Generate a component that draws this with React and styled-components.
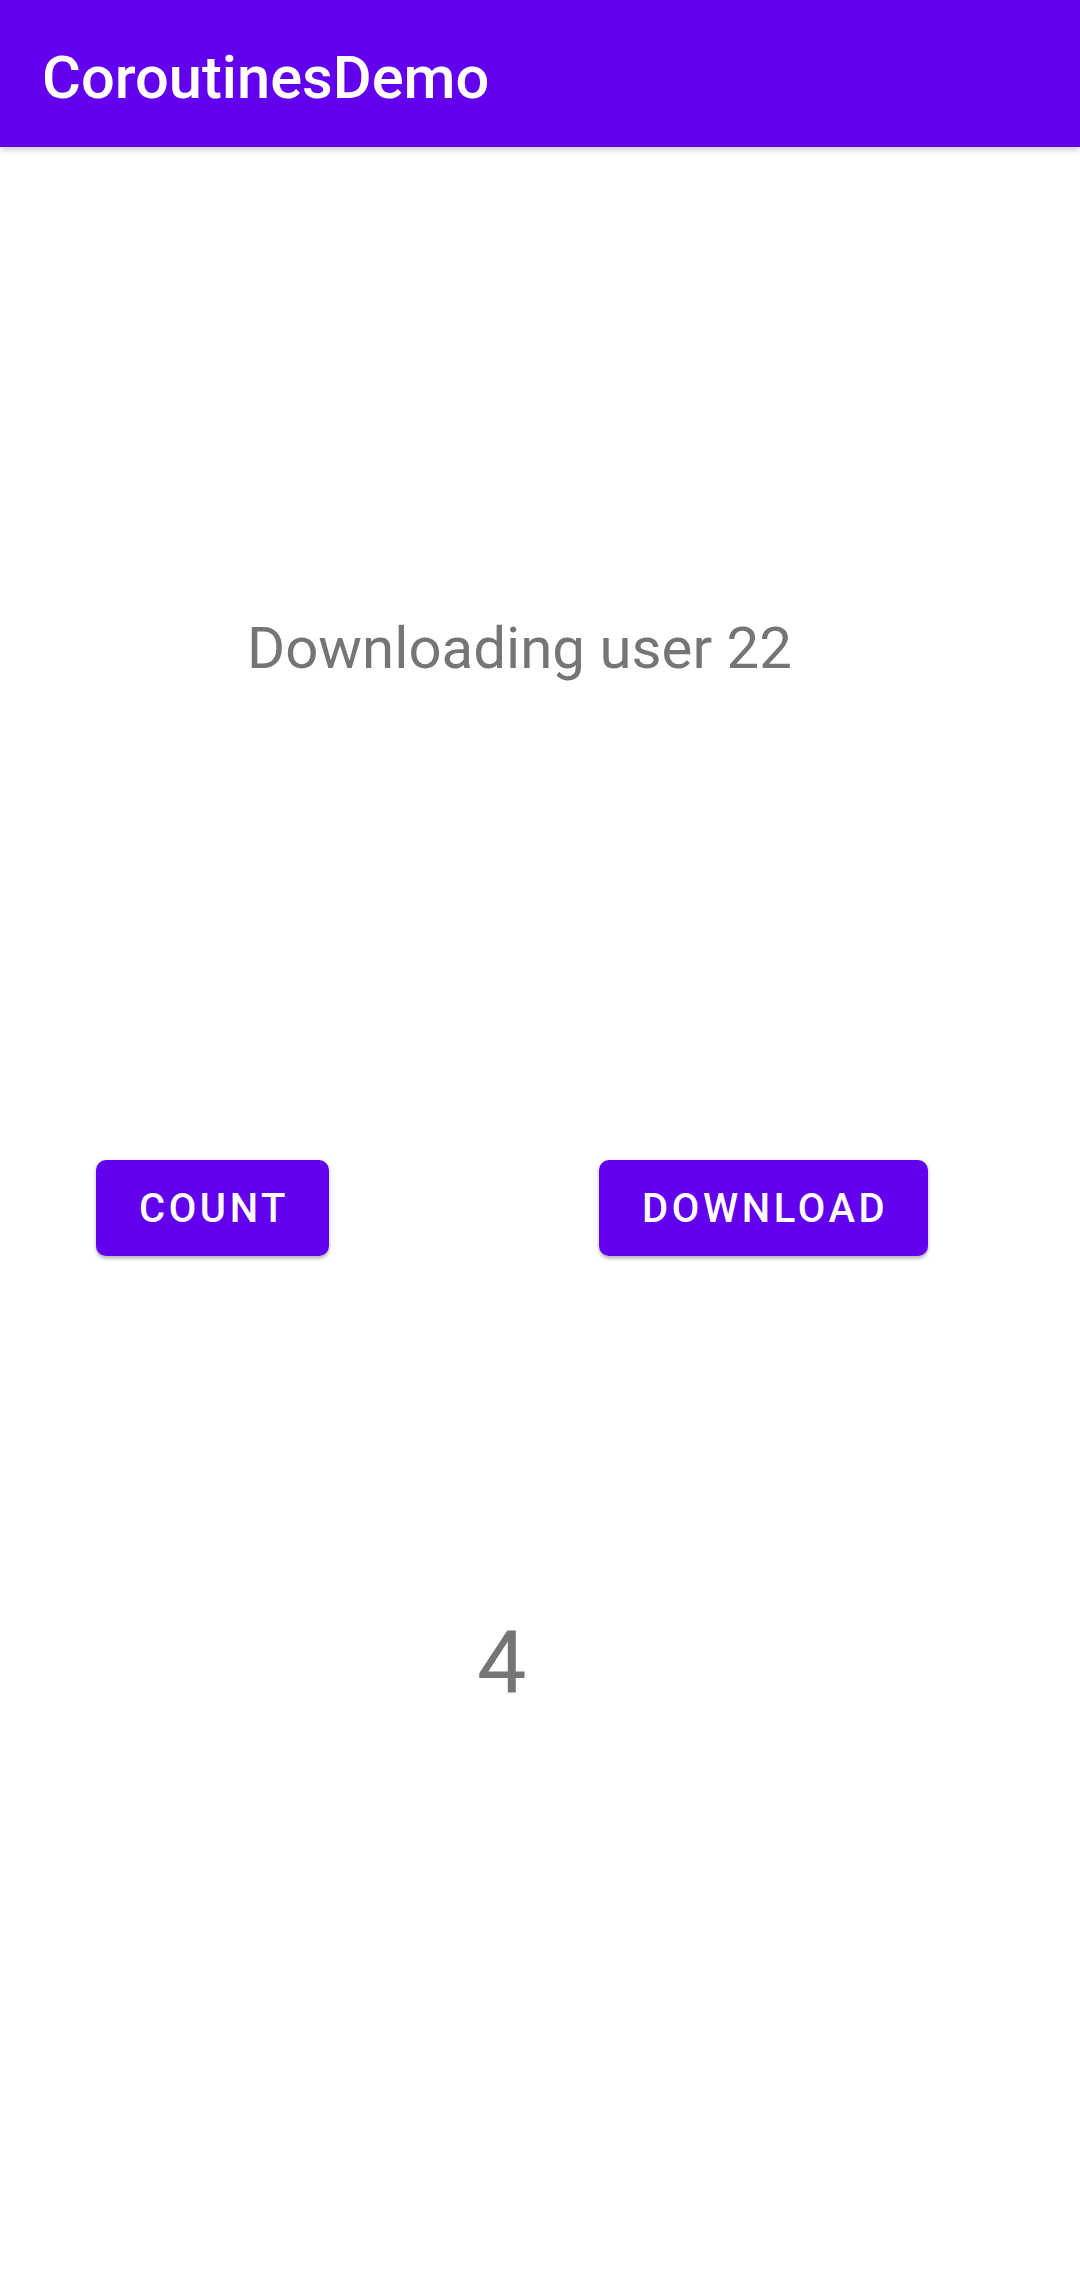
import React from "react";
import styled, { createGlobalStyle } from "styled-components";

const Global = createGlobalStyle`
  html, body { margin: 0; padding: 0; background: #ffffff; }
  body { font-family: Roboto, "Noto Sans", sans-serif; }
`;

const Screen = styled.div`
  width: 1080px;
  min-height: 2273px;
  background: #ffffff;
  display: flex;
  flex-direction: column;
`;

const Toolbar = styled.header`
  height: 147px;
  box-sizing: border-box;
  padding: 8px 0 0 42px;
  background: #6200ee;
  display: flex;
  align-items: center;
  box-shadow: 0 3px 6px rgba(0, 0, 0, 0.18);
  position: relative;
  z-index: 1;
`;

const Title = styled.h1`
  margin: 0;
  font-family: Roboto, sans-serif;
  font-weight: 500;
  font-size: 59.6px;
  line-height: normal;
  color: #ffffff;
`;

const Content = styled.main`
  display: flex;
  flex-direction: column;
`;

const Label = styled.div`
  margin-top: ${(p) => p.$top}px;
  padding-left: ${(p) => p.$left}px;
  font-family: Roboto, sans-serif;
  font-weight: 400;
  font-size: ${(p) => p.$size}px;
  line-height: normal;
  color: #757575;
`;

const ButtonRow = styled.div`
  margin-top: 478px;
  padding-left: 96px;
  display: flex;
  gap: 270px;
`;

const Button = styled.button`
  height: 96px;
  padding: 0 40px 0 43px;
  border: none;
  border-radius: 10px;
  background: #6200ee;
  color: #ffffff;
  font-family: Roboto, sans-serif;
  font-weight: 500;
  font-size: 40px;
  letter-spacing: 3.6px;
  text-transform: uppercase;
  display: flex;
  align-items: center;
  box-shadow: 0 3px 3px rgba(0, 0, 0, 0.2), 0 1px 6px rgba(0, 0, 0, 0.12);
`;

export default function App() {
  return (
    <>
      <Global />
      <Screen>
        <Toolbar>
          <Title>CoroutinesDemo</Title>
        </Toolbar>
        <Content>
          <Label $top={467} $left={247} $size={58.2}>
            Downloading user 22
          </Label>
          <ButtonRow>
            <Button>Count</Button>
            <Button>Download</Button>
          </ButtonRow>
          <Label $top={354} $left={477} $size={88}>
            4
          </Label>
        </Content>
      </Screen>
    </>
  );
}
